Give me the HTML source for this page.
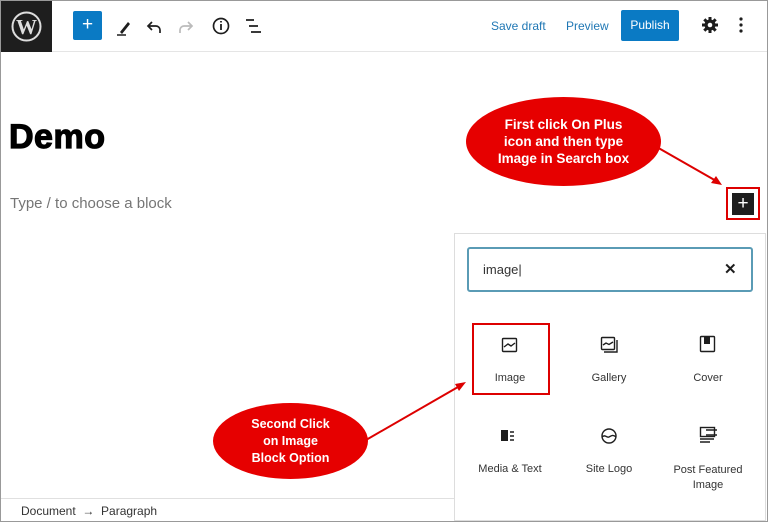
<!DOCTYPE html>
<html><head><meta charset="utf-8"><style>
*{box-sizing:border-box;margin:0;padding:0}
body{width:768px;height:522px;overflow:hidden;background:#fff;font-family:"Liberation Sans",sans-serif;position:relative;color:#1e1e1e}
.frame{position:absolute;inset:0;border:1px solid #999}
.top{position:absolute;left:0;top:0;width:768px;height:52px;border-bottom:1px solid #e5e5e5}
.wp{position:absolute;left:1px;top:1px;width:51px;height:51px;background:#1e1e1e}
.abs{position:absolute}
.btn-blue{left:73px;top:11px;width:29px;height:29px;background:#0a7ac4;border-radius:2px;color:#fff;font-size:19px;text-align:center;line-height:28px}
.t{position:absolute;font-size:12px;color:#1f77b4}
.pub{left:621px;top:10px;width:58px;height:31px;background:#0a7ac4;color:#fff;font-size:12px;text-align:center;line-height:31px;border-radius:2px}
h1{position:absolute;left:9px;top:118px;font-size:34px;font-weight:bold;color:#000;-webkit-text-stroke:1.2px #000;letter-spacing:0.5px}
.ph{position:absolute;left:10px;top:195px;font-size:15px;color:#757575}
.panel{position:absolute;left:454px;top:233px;width:312px;height:288px;border:1px solid #ddd;background:#fff}
.search{position:absolute;left:467px;top:247px;width:286px;height:45px;border:2px solid #5a9bb5;border-radius:3px}
.lbl{position:absolute;font-size:11px;color:#333;text-align:center;width:100px}
.foot{position:absolute;left:0;top:498px;width:454px;height:24px;border-top:1px solid #e0e0e0;font-size:12px;color:#333;padding:5px 0 0 21px}
.ell{position:absolute;background:#e60000;border-radius:50%;color:#fff;font-weight:bold;text-align:center;display:flex;align-items:center;justify-content:center;line-height:17px}
</style></head><body>
<div class="top"></div>
<div class="wp"><svg width="51" height="51" viewBox="0 0 51 51"><circle cx="25.5" cy="25.5" r="14" fill="none" stroke="#ddd" stroke-width="2"/><text x="25.5" y="33" text-anchor="middle" font-family="Liberation Serif" font-weight="bold" font-size="21" fill="#ddd">W</text></svg></div>
<div class="abs btn-blue">+</div>
<svg class="abs" style="left:112px;top:14px" width="160" height="24" viewBox="0 0 160 24">
<path d="M8 18l8-10 2 2-8 10z" fill="#1e1e1e"/><path d="M5 21h9" stroke="#1e1e1e" stroke-width="1.5"/>
<path d="M40 8l-4 4 4 4M36 12h8a4 4 0 0 1 4 4v3" fill="none" stroke="#1e1e1e" stroke-width="1.7"/>
<path d="M76 8l4 4-4 4M80 12h-8a4 4 0 0 0-4 4v3" fill="none" stroke="#bbb" stroke-width="1.7"/>
<circle cx="109" cy="12" r="7.5" fill="none" stroke="#1e1e1e" stroke-width="1.7"/><path d="M109 10v6M109 7v1.5" stroke="#1e1e1e" stroke-width="1.8"/>
<path d="M134 6h8M137 12h9M139 18h10" stroke="#1e1e1e" stroke-width="1.8"/>
</svg>
<div class="t" style="left:491px;top:19px">Save draft</div>
<div class="t" style="left:566px;top:19px">Preview</div>
<div class="abs pub">Publish</div>
<svg class="abs" style="left:700px;top:15px" width="50" height="22" viewBox="0 0 50 22"><g stroke="#1e1e1e" stroke-width="3"><path d="M10 2v16M2 10h16M4.3 4.3l11.4 11.4M15.7 4.3L4.3 15.7"/></g><circle cx="10" cy="10" r="5.5" fill="#1e1e1e"/><circle cx="10" cy="10" r="2.3" fill="#fff"/><circle cx="41" cy="4" r="1.6" fill="#1e1e1e"/><circle cx="41" cy="10" r="1.6" fill="#1e1e1e"/><circle cx="41" cy="16" r="1.6" fill="#1e1e1e"/></svg>
<h1>Demo</h1>
<div class="ph">Type / to choose a block</div>
<div class="abs" style="left:726px;top:187px;width:34px;height:33px;border:2px solid #d00"></div>
<div class="abs" style="left:732px;top:193px;width:22px;height:22px;background:#1e1e1e;color:#fff;font-size:19px;text-align:center;line-height:21px">+</div>
<div class="panel"></div>
<div class="search"></div>
<div class="abs" style="left:483px;top:262px;font-size:13px;color:#333">image|</div>
<div class="abs" style="left:724px;top:260px;font-size:15px;font-weight:bold">✕</div>
<div class="abs" style="left:472px;top:323px;width:78px;height:72px;border:2px solid #d00"></div>
<svg class="abs" style="left:454px;top:330px" width="312" height="130" viewBox="0 0 312 130">
<g fill="none" stroke="#1e1e1e" stroke-width="1.4">
<rect x="48.5" y="8.5" width="14" height="13" rx="1"/><path d="M50 17l4-3 3 2 4-3"/>
<rect x="147.5" y="7.5" width="13" height="12" rx="1"/><path d="M149 15l3-2 3 1.5 4-2.5M150 22h13V10"/>
<rect x="246.5" y="6.5" width="14" height="15" rx="1"/>
<circle cx="155" cy="106" r="7"/><path d="M148 107c3-3 5 1 7 0s4-3 7 0"/>
<path d="M252 100h11M252 105h11M246 109h14M246 112h10" /><rect x="246.5" y="97.5" width="14" height="9"/>
<path d="M56 102h4M56 106h4M56 110h4"/>
</g>
<rect x="250" y="7" width="6" height="7" fill="#1e1e1e"/>
<rect x="47" y="100" width="7" height="11" fill="#1e1e1e"/>
</svg>
<div class="lbl" style="left:460px;top:372px">Image</div>
<div class="lbl" style="left:559px;top:372px">Gallery</div>
<div class="lbl" style="left:658px;top:372px">Cover</div>
<div class="lbl" style="left:460px;top:463px">Media &amp; Text</div>
<div class="lbl" style="left:559px;top:463px">Site Logo</div>
<div class="lbl" style="left:658px;top:463px;line-height:15px">Post Featured<br>Image</div>
<div class="foot">Document &nbsp;→&nbsp; Paragraph</div>
<svg class="abs" style="left:0;top:0" width="768" height="522">
<path d="M655 146L718 182" stroke="#d00" stroke-width="2"/><path d="M722 185l-11-2 5-7z" fill="#d00"/>
<path d="M366 440L458 387" stroke="#d00" stroke-width="2"/><path d="M466 382l-7 9-4-7z" fill="#d00"/>
</svg>
<div class="ell" style="left:466px;top:97px;width:195px;height:89px;font-size:13.5px">First click On Plus<br>icon and then type<br>Image in Search box</div>
<div class="ell" style="left:213px;top:403px;width:155px;height:76px;font-size:12.5px">Second Click<br>on Image<br>Block Option</div>
<div class="frame"></div>
</body></html>
